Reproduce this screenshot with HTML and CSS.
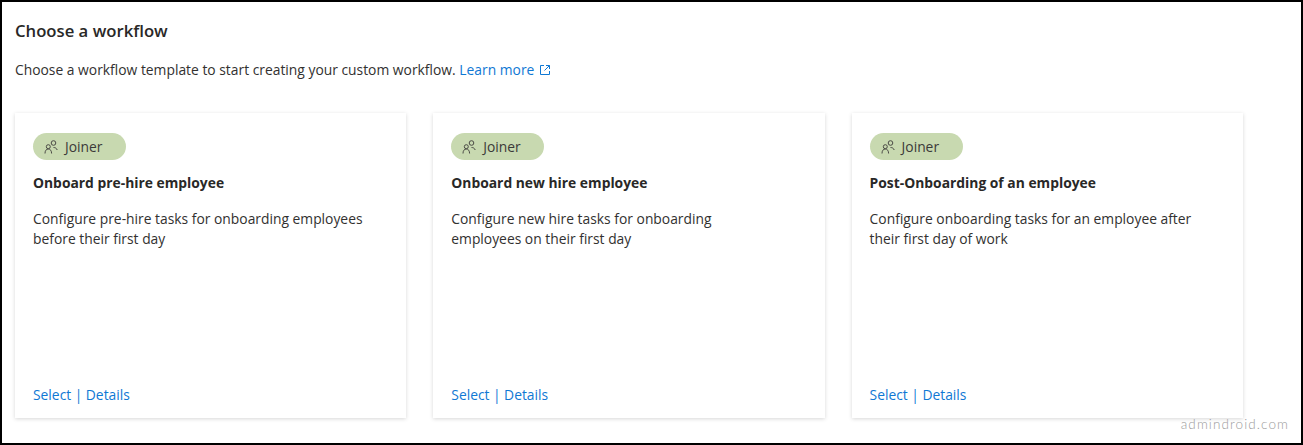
FILE: index.html
```html
<!DOCTYPE html>
<html lang="en">
<head>
<meta charset="utf-8">
<title>Choose a workflow</title>
<link rel="stylesheet" href="styles.css">
</head>
<body>
<main class="frame">
  <h1 class="title">Choose a workflow</h1>
  <p class="intro">Choose a workflow template to start creating your custom workflow. <a class="link" href="#">Learn more</a>
    <svg class="ext" width="12" height="12" viewBox="0 0 12 12" fill="none" stroke="#0f78d4" stroke-width="1"><path d="M5 1.500H1.500v9h9V7M7 1.500h3.500V5M10.500 1.500 5.500 6.500"/></svg>
  </p>
  <section class="cards">
    <article class="card">
      <span class="pill"><svg class="people" width="14" height="14" viewBox="0 0 14 14" fill="none" stroke="#4a4a45" stroke-width="1"><circle cx="9.500" cy="3" r="2.300"/><circle cx="4.300" cy="6.700" r="2"/><path d="M1 13.500c0-2.700 1.200-4.500 3.300-4.500s3.300 1.800 3.300 4.500M9.500 7.500c1.800 0 3.200 .8 3.700 2.500"/></svg>Joiner</span>
      <h2 class="name">Onboard pre-hire employee</h2>
      <p class="desc">Configure pre-hire tasks for onboarding employees before their first day</p>
      <div class="actions"><a class="link" href="#">Select</a><span class="sep">|</span><a class="link" href="#">Details</a></div>
    </article>
    <article class="card">
      <span class="pill"><svg class="people" width="14" height="14" viewBox="0 0 14 14" fill="none" stroke="#4a4a45" stroke-width="1"><circle cx="9.500" cy="3" r="2.300"/><circle cx="4.300" cy="6.700" r="2"/><path d="M1 13.500c0-2.700 1.200-4.500 3.300-4.500s3.300 1.800 3.300 4.500M9.500 7.500c1.800 0 3.200 .8 3.700 2.500"/></svg>Joiner</span>
      <h2 class="name">Onboard new hire employee</h2>
      <p class="desc">Configure new hire tasks for onboarding<br>employees on their first day</p>
      <div class="actions"><a class="link" href="#">Select</a><span class="sep">|</span><a class="link" href="#">Details</a></div>
    </article>
    <article class="card">
      <span class="pill"><svg class="people" width="14" height="14" viewBox="0 0 14 14" fill="none" stroke="#4a4a45" stroke-width="1"><circle cx="9.500" cy="3" r="2.300"/><circle cx="4.300" cy="6.700" r="2"/><path d="M1 13.500c0-2.700 1.200-4.500 3.300-4.500s3.300 1.800 3.300 4.500M9.500 7.500c1.800 0 3.200 .8 3.700 2.500"/></svg>Joiner</span>
      <h2 class="name">Post-Onboarding of an employee</h2>
      <p class="desc">Configure onboarding tasks for an employee after<br>their first day of work</p>
      <div class="actions"><a class="link" href="#">Select</a><span class="sep">|</span><a class="link" href="#">Details</a></div>
    </article>
  </section>
  <span class="watermark">admindroid.com</span>
</main>
</body>
</html>
```
FILE: styles.css
```css
* { box-sizing: border-box; }
html, body { margin: 0; padding: 0; }
body { background: #fff; color: #323130; font-family: "Open Sans", "Noto Sans", sans-serif; font-size: 13.850px; }
.frame { position: relative; width: 1303px; height: 445px; border: 2px solid #000; padding: 19px 13px 0; overflow: hidden; }
.title { margin: 0; font-size: 16.700px; line-height: 20px; font-weight: 600; color: #292827; }
.intro { margin: 19px 0 0; line-height: 20px; height: 20px; }
.link { color: #0f78d4; text-decoration: none; }
.ext { margin-left: 1px; vertical-align: -1px; }
.cards { display: flex; gap: 27px; margin-top: 33px; }
.card { width: 391.300px; height: 305px; background: #fff; padding: 20px 18px 13px; display: flex; flex-direction: column; align-items: flex-start; box-shadow: 0 1px 4px rgba(0,0,0,.16); }
.pill { display: flex; align-items: center; width: 93px; height: 27px; padding-left: 11px; border-radius: 14px; background: #c8d9b0; color: #3b3a39; }
.people { margin-right: 7px; }
.name { margin: 13px 0 0; font-size: 13.850px; line-height: 20px; font-weight: 700; color: #292827; }
.desc { margin: 16px 0 0; line-height: 20px; width: 345px; }
.actions { margin-top: auto; line-height: 20px; display: flex; gap: 3.500px; }
.sep { color: #0f78d4; }
.watermark { position: absolute; right: 12px; bottom: 11px; font-family: Lato, sans-serif; font-weight: 300; font-size: 13.500px; letter-spacing: 1.100px; color: #9a9a9a; }
```
